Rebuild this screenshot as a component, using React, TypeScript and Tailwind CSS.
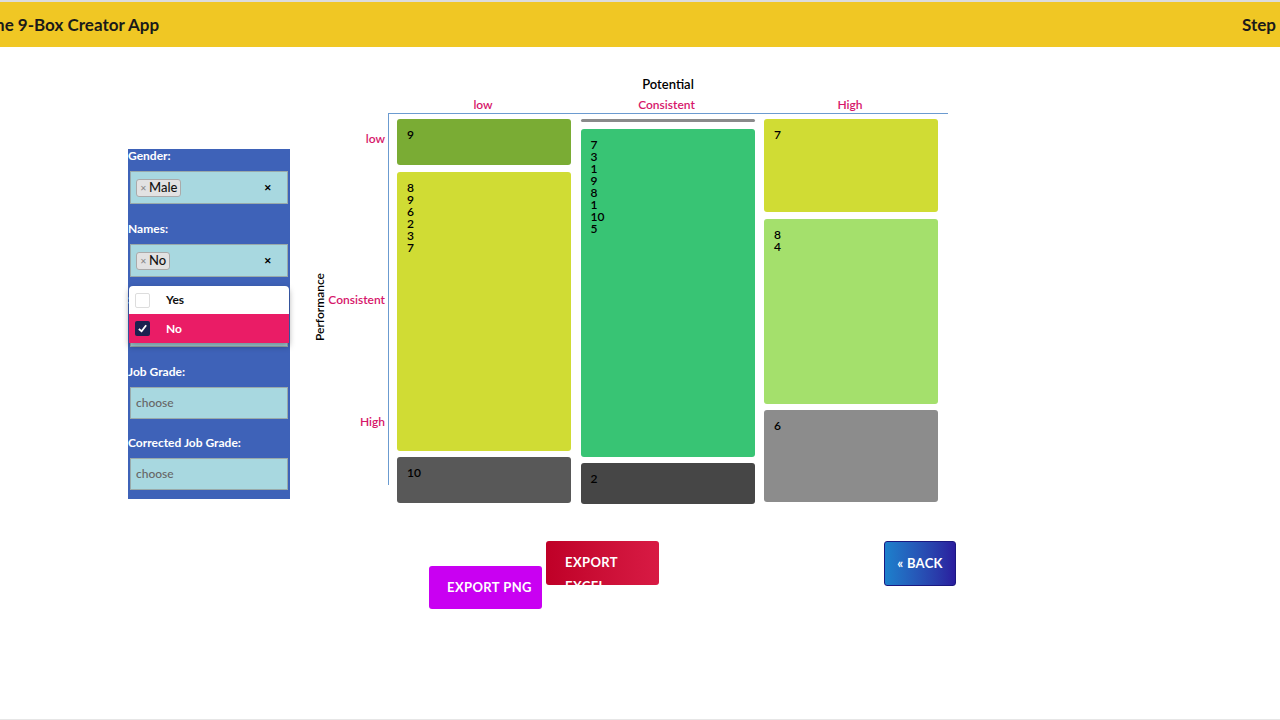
import React from "react";

const FONT = "font-['Lato','Open_Sans',sans-serif]";

type Box = { h: string; bg: string; items: string[]; line?: boolean };

const COLUMNS: Box[][] = [
  [
    { h: "h-[46px]", bg: "bg-[#7aac34]", items: ["9"] },
    { h: "h-[279px]", bg: "bg-[#d0dc34]", items: ["8", "9", "6", "2", "3", "7"] },
    { h: "h-[46px]", bg: "bg-[#585858]", items: ["10"] },
  ],
  [
    { h: "h-[3px]", bg: "bg-[#8a8a8a]", items: [], line: true },
    { h: "h-[328px]", bg: "bg-[#38c474]", items: ["7", "3", "1", "9", "8", "1", "10", "5"] },
    { h: "h-[41px]", bg: "bg-[#464646]", items: ["2"] },
  ],
  [
    { h: "h-[93px]", bg: "bg-[#d0dc34]", items: ["7"] },
    { h: "h-[185px]", bg: "bg-[#a4e06c]", items: ["8", "4"] },
    { h: "h-[92px]", bg: "bg-[#8c8c8c]", items: ["6"] },
  ],
];

const Label = ({ children, className = "" }: { children: React.ReactNode; className?: string }) => (
  <div className={`text-[12px] leading-[14px] font-bold text-white ${className}`}>{children}</div>
);

const Chip = ({ text }: { text: string }) => (
  <div className="flex items-center h-[33px] mx-[2px] bg-[#a8d8e0] border border-[#9aa] px-[5px] justify-between">
    <div className="flex items-center h-[18px] px-[3px] bg-[#e2e2e2] border border-[#aaa] rounded-[3px]">
      <span className="text-[8px] text-[#888] mr-[2px]">✕</span>
      <span className="text-[13px] text-[#111] font-medium">{text}</span>
    </div>
    <span className="text-[9px] font-bold text-black mr-[10px]">✕</span>
  </div>
);

const Choose = () => (
  <div className="flex items-center h-[32px] mx-[2px] bg-[#a8d8e0] border border-[#9aa] px-[5px]">
    <span className="text-[12px] text-[#666] font-medium">choose</span>
  </div>
);

const Sidebar = () => (
  <div className="relative w-[162px] mt-[102px] ml-[128px] bg-[#3e62b8] pb-[9px]">
    <Label>Gender:</Label>
    <div className="mt-[8px]">
      <Chip text="Male" />
    </div>
    <Label className="mt-[18px]">Names:</Label>
    <div className="mt-[8px]">
      <Chip text="No" />
    </div>
    <Label className="mt-[16px]">Status:</Label>
    <div className="mt-[8px]">
      <Choose />
    </div>
    <Label className="mt-[18px]">Job Grade:</Label>
    <div className="mt-[8px]">
      <Choose />
    </div>
    <Label className="mt-[17px]">Corrected Job Grade:</Label>
    <div className="mt-[8px]">
      <Choose />
    </div>

    {/* open dropdown */}
    <div className="absolute left-[1px] top-[137px] w-[160px] bg-white rounded-t-[4px] shadow-[0_3px_6px_rgba(0,0,0,0.35)]">
      <div className="flex items-center h-[28px] pl-[6px]">
        <div className="w-[15px] h-[15px] border border-[#ddd] rounded-[2px] bg-white" />
        <span className="ml-[16px] text-[12px] font-bold text-[#111]">Yes</span>
      </div>
      <div className="flex items-center h-[29px] pl-[6px] bg-[#ea1c66]">
        <div className="w-[15px] h-[15px] rounded-[2px] bg-[#1b2150] flex items-center justify-center">
          <svg width="11" height="11" viewBox="0 0 12 12">
            <path d="M2 6.5 L5 9 L10 2.5" stroke="white" strokeWidth="2" fill="none" />
          </svg>
        </div>
        <span className="ml-[16px] text-[12px] font-bold text-white">No</span>
      </div>
    </div>
  </div>
);

const Grid = () => (
  <div className="ml-[24px] flex flex-col">
    <div className="mt-[29px] ml-[74px] w-[560px] text-center text-[13px] leading-[16px] font-semibold text-black">
      Potential
    </div>
    <div className="mt-[6px] ml-[82px] flex gap-[9.5px]">
      {["low", "Consistent", "High"].map((t) => (
        <div key={t} className="w-[174px] text-center text-[12px] leading-[14px] font-semibold text-[#d6166a]">
          {t}
        </div>
      ))}
    </div>
    <div className="mt-[1px] flex items-start">
      <div className="w-[12px] mt-[160px] flex items-start justify-center">
        <div className="[writing-mode:vertical-rl] rotate-180 text-[12px] leading-[12px] font-semibold text-black">
          Performance
        </div>
      </div>
      <div className="w-[62px] pr-[3px] flex flex-col items-end text-[12px] leading-[14px] font-semibold text-[#d6166a]">
        <div className="mt-[19px]">low</div>
        <div className="mt-[147px]">Consistent</div>
        <div className="mt-[108px]">High</div>
      </div>
      <div className="w-[560px] h-[372px] border-t border-l border-[#6b9bd0] pt-[5px] pl-[8px]">
        <div className="flex gap-[9.5px]">
          {COLUMNS.map((col, i) => (
            <div key={i} className="w-[174px] flex flex-col gap-[6.5px]">
              {col.map((b, j) => (
                <div
                  key={j}
                  className={`${b.h} ${b.bg} ${b.line ? "rounded-full" : "rounded-[3px] pt-[10px] pl-[10px]"}`}
                >
                  {b.items.map((n, k) => (
                    <div key={k} className="text-[12px] leading-[12px] font-semibold text-black">
                      {n}
                    </div>
                  ))}
                </div>
              ))}
            </div>
          ))}
        </div>
      </div>
    </div>
  </div>
);

export default function App() {
  return (
    <div className={`${FONT} w-full h-[720px] bg-white overflow-hidden flex flex-col border-b border-[#e6e6e6]`}>
      <header className="h-[47px] shrink-0 bg-[#f0c724] border-t-2 border-[#dcdcdc] flex items-center justify-between">
        <h1 className="-ml-[15px] text-[17px] font-bold text-[#1a1a1a]">The 9-Box Creator App</h1>
        <span className="mr-[4px] text-[17px] font-bold text-[#1a1a1a]">Step</span>
      </header>

      <div className="flex items-start h-[454px] shrink-0">
        <Sidebar />
        <Grid />
      </div>

      <div className="mt-[40px] flex items-start">
        <button className="ml-[429px] mt-[25px] w-[113px] h-[43px] rounded-[3px] bg-[#c900f2] pl-[18px] text-left text-[13px] font-bold tracking-[0.4px] text-white">
          EXPORT PNG
        </button>
        <button className="ml-[4px] w-[113px] h-[44px] overflow-hidden rounded-[3px] bg-gradient-to-r from-[#bf0027] to-[#d81a44] pl-[19px] pr-[30px] pt-[9px] text-left text-[13px] leading-[24px] font-bold tracking-[0.4px] text-white flex flex-col items-start justify-start">
          <span>EXPORT</span>
          <span>EXCEL</span>
        </button>
        <button className="ml-[225px] w-[72px] h-[45px] rounded-[3px] border border-[#1a1880] bg-gradient-to-r from-[#1c80cc] to-[#2a1c9e] text-[13px] font-bold tracking-[0.3px] text-white">
          « BACK
        </button>
      </div>
    </div>
  );
}
